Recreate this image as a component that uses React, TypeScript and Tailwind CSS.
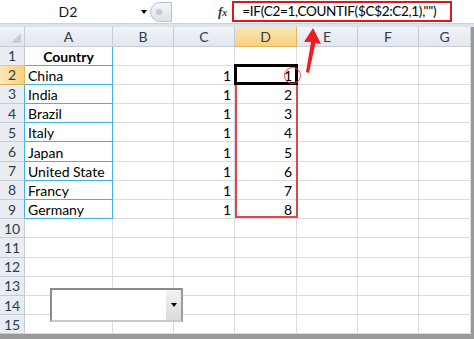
import React from 'react';

// --- sheet data ---
const cols = [
  { key: 'A', w: 'w-[88px]' },
  { key: 'B', w: 'w-[61px]' },
  { key: 'C', w: 'w-[61px]' },
  { key: 'D', w: 'w-[62px]' },
  { key: 'E', w: 'w-[61px]' },
  { key: 'F', w: 'w-[61px]' },
  { key: 'G', w: 'w-[52px]' },
];

const countries = ['China', 'India', 'Brazil', 'Italy', 'Japan', 'United State', 'Francy', 'Germany'];
const rows = Array.from({ length: 15 }, (_, i) => i + 1);

const font = { fontFamily: 'Lato, "Liberation Sans", sans-serif' };

const NameBar = () => (
  <div className="flex h-[24px] bg-white border-b border-[#c9d2dd]">
    <div className="relative flex w-[150px] items-center justify-center text-[14px] text-[#1a1a1a]">
      <span className="ml-[-14px]">D2</span>
      <span className="absolute left-[141px] top-[10px] h-0 w-0 border-x-[3px] border-t-[4px] border-x-transparent border-t-black" />
    </div>
    <div className="flex h-full w-[24px] items-center">
      <div className="flex h-[20px] w-[22px] items-center rounded-l-full border border-[#b9c2cc] bg-gradient-to-b from-[#f4f6f8] to-[#dde2e8] pl-[5px]">
        <div className="h-[6px] w-[6px] rounded-full bg-[#c3c9d1]" />
      </div>
    </div>
    <div className="flex flex-1 items-center">
      <span className="ml-[44px] text-[13px] italic font-bold text-[#333]" style={{ fontFamily: '"Liberation Serif", serif' }}>
        f<span className="text-[10px]">x</span>
      </span>
      <div className="ml-[5px] flex h-[21px] w-[220px] items-center border-2 border-[#e0161d] pl-[8px] text-[13.5px] tracking-[-0.3px] text-black whitespace-nowrap">
        =IF(C2=1,COUNTIF($C$2:C2,1),"")
      </div>
    </div>
  </div>
);

const HeaderRow = () => (
  <div className="flex h-[19.5px] bg-[#e9edf2]">
    <div className="relative w-[25px] border-r border-b border-[#c5ccd6] bg-gradient-to-b from-[#f0f3f7] to-[#e1e6ec]">
      <span className="absolute right-[3px] bottom-[3px] h-0 w-0" style={{ borderBottom: '10px solid #c9ced5', borderLeft: '10px solid transparent' }} />
    </div>
    {cols.map((c) => (
      <div
        key={c.key}
        className={`${c.w} flex items-center justify-center border-r border-b text-[14px] ${
          c.key === 'D'
            ? 'border-[#e1b65a] bg-gradient-to-b from-[#fbe7b4] to-[#f6d17e] text-[#3b3b3b]'
            : 'border-[#c5ccd6] bg-gradient-to-b from-[#f1f4f8] to-[#e2e7ee] text-[#2e3c4d]'
        }`}
      >
        {c.key}
      </div>
    ))}
  </div>
);

const Cell = ({ r, c }: { r: number; c: string }) => {
  const inA = c === 'A' && r <= 9;
  const border = inA ? 'border-[#41b2e3]' : 'border-[#dadcdf]';
  let content: React.ReactNode = null;
  let extra = '';
  if (c === 'A' && r === 1) {
    content = 'Country';
    extra = 'bg-[#76923c] justify-center font-bold text-[#15210a]';
  } else if (c === 'A' && r >= 2 && r <= 9) {
    content = countries[r - 2];
    extra = 'pl-[3px]';
  } else if (c === 'C' && r >= 2 && r <= 9) {
    content = '1';
    extra = 'justify-end pr-[3px]';
  } else if (c === 'D' && r >= 2 && r <= 9) {
    content = String(r - 1);
    extra = 'justify-end pr-[4px]';
  }
  const w = cols.find((x) => x.key === c)!.w;
  return (
    <div className={`${w} flex items-center pt-[1px] border-r border-b bg-white text-[14px] text-black ${border} ${extra}`}>
      {content}
    </div>
  );
};

const SheetRow = ({ r }: { r: number }) => (
  <div className="flex h-[19.2px]">
    <div
      className={`flex w-[25px] items-center justify-center border-r border-b text-[14px] ${
        r === 2
          ? 'border-[#e1b65a] bg-gradient-to-r from-[#fbe7b4] to-[#f6d17e] text-[#3b3b3b]'
          : `border-[#c5ccd6] bg-[#e9edf2] text-[#2e3c4d] ${r >= 2 && r <= 9 ? 'border-r-[#41b2e3]' : ''}`
      }`}
    >
      {r}
    </div>
    {cols.map((c) => (
      <Cell key={c.key} r={r} c={c.key} />
    ))}
  </div>
);

const App: React.FC = () => {
  return (
    <div className="relative h-[339px] w-[474px] overflow-hidden bg-[#dde3ea]" style={font}>
      <NameBar />
      <div className="h-[3px]" />
      <div className="flex">
        <div className="flex flex-col">
          <HeaderRow />
          {rows.map((r) => (
            <SheetRow key={r} r={r} />
          ))}
        </div>
        <div className="w-[3px] bg-[#9a9a9a]" />
      </div>
      <div className="absolute left-0 right-0 bottom-0 h-[5px] bg-[#9a9a9a]" />

      {/* red outline D2:D9 */}
      <div className="absolute left-[235px] top-[65px] h-[153px] w-[63px] border-2 border-[#e0454a]" />
      {/* active cell D2 */}
      <div className="absolute left-[234px] top-[64px] h-[21px] w-[64px] border-[3px] border-black" />
      {/* circle on 1 */}
      <div className="absolute left-[284px] top-[67px] h-[17px] w-[17px] rounded-full border-[1.5px] border-[#e3474c]" />
      {/* arrow */}
      <svg className="absolute left-[300px] top-[27px]" width="22" height="48" viewBox="0 0 22 48">
        <polygon points="13,1 21,17 15.5,16 9,46 6,45 11,15 4,15" fill="#ee1c25" />
      </svg>

      {/* combo box control */}
      <div className="absolute left-[50px] top-[288px] flex h-[34px] w-[133px] border-2 border-[#8c8c8c] border-b-[#c8c8c8] border-r-[#9a9a9a] bg-white">
        <div className="flex-1" />
        <div className="flex w-[15px] items-center justify-center bg-gradient-to-b from-[#f2f2f2] to-[#dadada]">
          <span className="h-0 w-0 border-x-[3px] border-t-[4px] border-x-transparent border-t-black" />
        </div>
      </div>
    </div>
  );
};

export default App;
